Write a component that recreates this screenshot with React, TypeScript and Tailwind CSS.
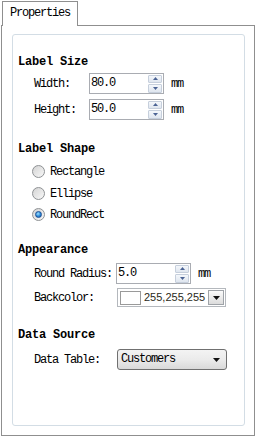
import React from "react";

const mono = "font-['Liberation_Mono','DejaVu_Sans_Mono',monospace] text-[12px] tracking-[-1.2px] text-black";
const head = "font-['Liberation_Mono','DejaVu_Sans_Mono',monospace] text-[12px] font-bold tracking-[-0.2px] text-black leading-[16px] h-[16px] pl-[5px]";

function Spinner({ value }: { value: string }) {
  return (
    <div className="flex h-[21px] w-[75px] items-center border border-[#a9acb2] bg-white">
      <div className={`${mono} flex-1 pl-[1px] leading-[19px] self-start`}>{value}</div>
      <div className="mr-[1px] flex h-[18px] w-[14px] flex-col gap-[1px]">
        <div className="flex flex-1 items-center justify-center rounded-[1px] border border-[#c6cfdc] bg-gradient-to-b from-[#f4f7fb] to-[#dfe6ef]">
          <svg width="5" height="3" viewBox="0 0 5 3">
            <path d="M0 3 L2.5 0 L5 3 Z" fill="#4b6394" />
          </svg>
        </div>
        <div className="flex flex-1 items-center justify-center rounded-[1px] border border-[#c6cfdc] bg-gradient-to-b from-[#f4f7fb] to-[#dfe6ef]">
          <svg width="5" height="3" viewBox="0 0 5 3">
            <path d="M0 0 L2.5 3 L5 0 Z" fill="#4b6394" />
          </svg>
        </div>
      </div>
    </div>
  );
}

function Radio({ label, checked }: { label: string; checked?: boolean }) {
  return (
    <div className="flex h-[21px] items-center gap-[5px] pl-[19px]">
      <div className="flex h-[13px] w-[13px] items-center justify-center rounded-full border border-[#8e9194] bg-gradient-to-br from-[#d4d4d4] to-[#f8f8f8]">
        {checked && (
          <div className="h-[7px] w-[7px] rounded-full border border-[#1c4f95] bg-[radial-gradient(circle_at_40%_35%,#9fe0ff,#2a8ad8_55%,#1a4f9c)]" />
        )}
      </div>
      <span className={`${mono} leading-[16px]`}>{label}</span>
    </div>
  );
}

export default function App() {
  return (
    <div className="h-[438px] w-[256px] overflow-hidden bg-white pt-[1px]">
      <div className={`${mono} relative z-10 -mb-px ml-[2px] h-[25px] w-[76px] border-l border-r border-t border-[#8f8f8f] bg-white pl-[7px] leading-[23px]`}>
        Properties
      </div>
      <div className="ml-[1px] h-[411px] w-[254px] border border-[#8f8f8f] bg-white pl-[10px] pt-[8px]">
        <div className="flex h-[392px] w-[233px] flex-col rounded-[3px] border border-[#d3dde5]">
          <div className={`${head} mt-[19px]`}>Label Size</div>
          <div className="mt-[3px] flex h-[21px] items-center pl-[21px]">
            <span className={`${mono} w-[55px]`}>Width:</span>
            <Spinner value="80.0" />
            <span className={`${mono} ml-[7px] text-[10px]`}>mm</span>
          </div>
          <div className="mt-[5px] flex h-[21px] items-center pl-[21px]">
            <span className={`${mono} w-[55px]`}>Height:</span>
            <Spinner value="50.0" />
            <span className={`${mono} ml-[7px] text-[10px]`}>mm</span>
          </div>

          <div className={`${head} mt-[21px]`}>Label Shape</div>
          <div className="mt-[4px] flex flex-col">
            <Radio label="Rectangle" />
            <div className="h-[1px]" />
            <Radio label="Ellipse" />
            <Radio label="RoundRect" checked />
          </div>

          <div className={`${head} mt-[17px]`}>Appearance</div>
          <div className="mt-[5px] flex h-[21px] items-center pl-[21px]">
            <span className={`${mono} w-[82px]`}>Round Radius:</span>
            <Spinner value="5.0" />
            <span className={`${mono} ml-[7px] text-[10px]`}>mm</span>
          </div>
          <div className="mt-[4px] flex h-[19px] items-center pl-[21px]">
            <span className={`${mono} w-[83px]`}>Backcolor:</span>
            <div className="flex h-[19px] w-[109px] items-center border border-[#b4b8bd] bg-white pl-[2px]">
              <div className="h-[14px] w-[21px] border border-[#9a9a9a] bg-white" />
              <span className="ml-[3px] flex-1 font-['Liberation_Sans',Arial,sans-serif] text-[11px] leading-[17px] text-[#2a2a1a]">
                255,255,255
              </span>
              <div className="mr-[1px] flex h-[15px] w-[16px] items-center justify-center border border-[#9fa3a8] bg-gradient-to-b from-[#fbfbfb] to-[#dcdcdc]">
                <svg width="7" height="4" viewBox="0 0 7 4">
                  <path d="M0 0 L3.5 4 L7 0 Z" fill="#111" />
                </svg>
              </div>
            </div>
          </div>

          <div className={`${head} mt-[20px]`}>Data Source</div>
          <div className="mt-[6px] flex h-[21px] items-center pl-[21px]">
            <span className={`${mono} w-[83px]`}>Data Table:</span>
            <div className="flex h-[21px] w-[110px] items-center rounded-[3px] border border-[#707070] bg-gradient-to-b from-[#f3f3f3] via-[#ebebeb] to-[#d9d9d9] pl-[3px] pr-[6px]">
              <span className={`${mono} flex-1 leading-[19px]`}>Customers</span>
              <svg width="7" height="4" viewBox="0 0 7 4">
                <path d="M0 0 L3.5 4 L7 0 Z" fill="#111" />
              </svg>
            </div>
          </div>
        </div>
      </div>
    </div>
  );
}
